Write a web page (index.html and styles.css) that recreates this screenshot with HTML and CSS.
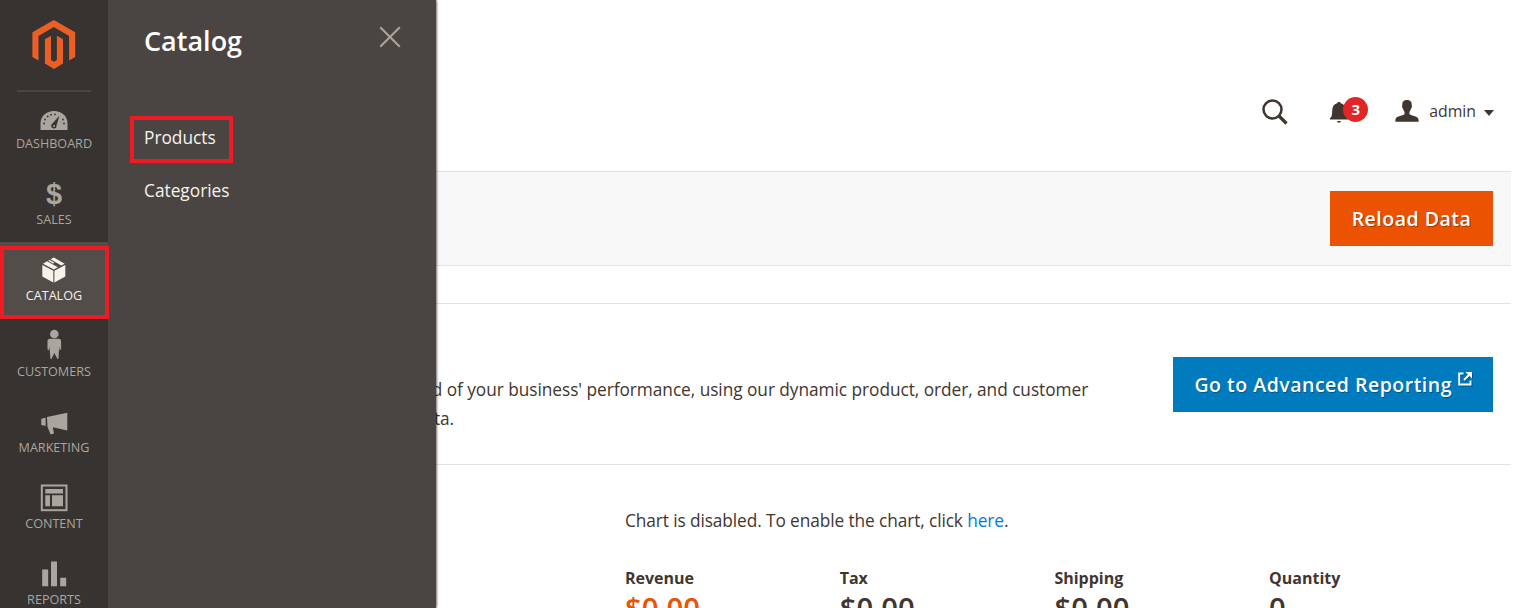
FILE: index.html
```
<!DOCTYPE html>
<html lang="en">
<head>
    <meta charset="UTF-8">
    <meta name="viewport" content="width=device-width, initial-scale=1.0">
    <title>Dashboard / Magento Admin</title>
    <link rel="stylesheet" href="styles.css">
</head>
<body>
    <aside class="menu-wrapper">
        <a class="logo" href="#">
            <svg width="44" height="50" viewBox="0 0 44 50">
                <path fill="#eb5f25" d="M21.8 0L43.2 12.3V37L37.1 40.5V15.9L21.8 7.1L6.5 15.9V40.5L.4 37V12.3ZM19 15.7V40L22 41.7L24.9 40V15.7L31 19.2V43.6L22 49L12.9 43.6V19.2Z"/>
            </svg>
        </a>
        <ul class="nav">
            <li class="nav-item">
                <a href="#">
                    <svg class="icon" viewBox="0 0 32 32">
                        <path fill="#aaa69f" d="M2.500 29V22.500C2.500 15 8.500 10 16 10s13.500 5 13.500 12.500V29Z"/>
                        <path fill="#373330" d="M21.500 14.500L18.500 24.500A2.700 2.700 0 1 1 14.500 22.500Z"/>
                        <circle cx="16" cy="25" r="1" fill="#aaa69f"/>
                        <g fill="#373330">
                            <circle cx="6" cy="22.500" r=".9"/><circle cx="7" cy="18.500" r=".9"/><circle cx="9.700" cy="15.500" r=".9"/>
                            <circle cx="13" cy="13.700" r=".9"/><circle cx="17" cy="13.300" r=".9"/><circle cx="25" cy="18.500" r=".9"/><circle cx="26" cy="22.500" r=".9"/>
                        </g>
                    </svg>
                    <span>Dashboard</span>
                </a>
            </li>
            <li class="nav-item">
                <a href="#">
                    <b class="icon dollar">$</b>
                    <span>Sales</span>
                </a>
            </li>
            <li class="nav-item active">
                <a href="#">
                    <svg class="icon" viewBox="0 0 32 32">
                        <g fill="#f7f3eb">
                            <path d="M4.300 11.900L15.300 17.800V29.500L4.300 23.400Z"/>
                            <path d="M27.300 11.900L16.400 17.800V29.500L27.300 23.400Z"/>
                            <path d="M5 10.700L9 8.300L19.800 14.300L15.900 16.600Z"/>
                            <path d="M12.500 6.300L15.900 4.500L26.600 10.700L23.300 12.500Z"/>
                            <path d="M10.100 7.700L11.400 7L16.500 9.800L14.900 10.400Z"/>
                        </g>
                    </svg>
                    <span>Catalog</span>
                </a>
            </li>
            <li class="nav-item">
                <a href="#">
                    <svg class="icon" viewBox="0 0 32 32">
                        <g fill="#aaa69f">
                            <circle cx="16.300" cy="5" r="4.300"/>
                            <path d="M12 9.800H20.600Q23.100 9.800 23.100 12.300V20.300L21.800 21.300L21.300 17.500L20.400 30H19.500L16.300 24L13.500 30H12.500L11.300 17.500L10.800 21.300L9.500 20.300V12.300Q9.500 9.800 12 9.800Z"/>
                        </g>
                    </svg>
                    <span>Customers</span>
                </a>
            </li>
            <li class="nav-item">
                <a href="#">
                    <svg class="icon" viewBox="0 0 32 32">
                        <g fill="#aaa69f">
                            <path d="M9 12.100L29.300 7.800V25.400L14.800 22.300L16 28.500L12.700 29.500L9.500 22Z"/>
                            <path d="M3.300 13.800L7.600 12.700V21.100L3.300 20.100Z"/>
                        </g>
                    </svg>
                    <span>Marketing</span>
                </a>
            </li>
            <li class="nav-item">
                <a href="#">
                    <svg class="icon" viewBox="0 0 32 32">
                        <rect x="3.800" y="4.500" width="24.700" height="24.700" fill="none" stroke="#aaa69f" stroke-width="2"/>
                        <path fill="#aaa69f" d="M7.300 8H25V12.400H7.300ZM7.300 14.200H12V25.200H7.300ZM14 14.200H25V25.200H14Z"/>
                    </svg>
                    <span>Content</span>
                </a>
            </li>
            <li class="nav-item">
                <a href="#">
                    <svg class="icon" viewBox="0 0 32 32">
                        <path fill="#aaa69f" d="M4.200 12.500H10.200V29.300H4.200ZM13 4.500H19V29.300H13ZM22.200 20.800H28.200V29.300H22.200Z"/>
                    </svg>
                    <span>Reports</span>
                </a>
            </li>
        </ul>
    </aside>

    <div class="submenu">
        <div class="submenu-title">
            <strong>Catalog</strong>
            <a href="#" class="close">
                <svg width="22" height="22" viewBox="0 0 22 22"><path d="M1.200 1.200L20.800 20.800M20.800 1.200L1.200 20.800" stroke="#aca39b" stroke-width="2.100"/></svg>
            </a>
        </div>
        <ul>
            <li class="marked"><a href="#">Products</a></li>
            <li><a href="#">Categories</a></li>
        </ul>
    </div>

    <div class="page-wrapper">
        <header class="page-header">
            <svg class="search" width="26" height="26" viewBox="0 0 26 26" fill="none" stroke="#41362f">
                <circle cx="10.500" cy="10.500" r="9" stroke-width="2.500"/>
                <path d="M17 17L24.500 24.500" stroke-width="3.200"/>
            </svg>
            <div class="notifications">
                <svg width="18" height="22" viewBox="0 0 18 22" fill="#41362f">
                    <path d="M0 18.500V17.300C2.500 15.500 2 12 2.300 8.500C2.600 5 4.500 3 7.200 2.300C7.300 .5 10.700 .5 10.800 2.300C13.500 3 15.400 5 15.700 8.500C16 12 15.500 15.500 18 17.300V18.500Z"/>
                    <path d="M7 20H11Q10.700 21.700 9 21.700T7 20Z"/>
                </svg>
                <span class="counter">3</span>
            </div>
            <div class="account">
                <svg width="24" height="22" viewBox="0 0 24 22" fill="#41362f">
                    <path d="M12 0C15.500 0 17 2.200 16.700 5.500C17.300 6 16.800 8 16 8.500C15.700 10.200 15 11 14.500 12V14.300C16.500 16 23.600 16 23.600 20V21.700H.4V20C.4 16 7.500 16 9.500 14.300V12C9 11 8.300 10.200 8 8.500C7.200 8 6.700 6 7.300 5.500C7 2.200 8.500 0 12 0Z"/>
                </svg>
                <span>admin</span>
                <i class="caret"></i>
            </div>
        </header>
        <div class="page-actions">
            <button class="btn primary">Reload Data</button>
        </div>
        <section class="reporting">
            <p>Gain new insights and take command of your business' performance, using our dynamic product, order, and customer reports tailored to your customer data.</p>
            <a href="#" class="btn advanced">Go to Advanced Reporting
                <svg width="14" height="14" viewBox="0 0 14 14" fill="none" stroke="#fff" stroke-width="1.900">
                    <path d="M5.500 1.500H1.200V12.500H12.500V8.500M6 8L12 2"/>
                    <path d="M7.500 0H14V6.500Z" fill="#fff" stroke="none"/>
                </svg>
            </a>
        </section>
        <section class="dashboard">
            <p>Chart is disabled. To enable the chart, click <a href="#">here</a>.</p>
            <ul class="totals">
                <li><span>Revenue</span><strong class="price">$0.00</strong></li>
                <li><span>Tax</span><strong>$0.00</strong></li>
                <li><span>Shipping</span><strong>$0.00</strong></li>
                <li><span>Quantity</span><strong>0</strong></li>
            </ul>
        </section>
    </div>
</body>
</html>
```
FILE: styles.css
```
*, *::after {
    box-sizing: border-box;
}
body {
    font-family: 'Open Sans', sans-serif;
    font-size: 17.3px;
    margin: 0;
    height: 608px;
    overflow: hidden;
    display: flex;
    position: relative;
    background-color: #fff;
    color: #41362f;
}
ul {
    list-style: none;
    margin: 0;
    padding: 0;
}
a {
    text-decoration: none;
}

/* left menu */
.menu-wrapper {
    width: 108px;
    height: 608px;
    flex-shrink: 0;
    background-color: #373330;
}
.logo {
    display: block;
    height: 92px;
    margin: 0 17px;
    padding: 20px 0 0 15px;
    border-bottom: 2px solid #4a4542;
}
.logo svg {
    display: block;
}
.nav {
    margin-top: -2px;
}
.nav-item a {
    display: flex;
    flex-direction: column;
    align-items: center;
    height: 76px;
    padding-top: 11px;
    color: #aaa69f;
    font-size: 12.6px;
    line-height: 16px;
    text-transform: uppercase;
}
.icon {
    width: 32px;
    height: 32px;
    flex-shrink: 0;
}
.nav-item span {
    margin-top: 3px;
}
.dollar {
    font-family: 'Liberation Sans', sans-serif;
    font-size: 29px;
    line-height: 34px;
    text-align: center;
}
.nav-item.active a {
    background-color: #524d49;
    color: #f7f3eb;
    position: relative;
}
.nav-item.active a::after {
    content: '';
    position: absolute;
    top: 4px;
    left: 0;
    width: 109px;
    height: 73px;
    border: 4px solid #ed1c24;
    z-index: 3;
}

/* flyout */
.submenu {
    position: absolute;
    top: 0;
    left: 108px;
    width: 328px;
    height: 608px;
    background-color: #4a4542;
    box-shadow: 0 0 3px #000;
    clip-path: inset(0 -6px 0 0);
}
.submenu-title {
    display: flex;
    justify-content: space-between;
    height: 116px;
    padding: 22px 35px 0 36px;
    color: #fff;
    font-size: 27px;
    line-height: 38px;
}
.submenu-title strong {
    font-weight: 600;
}
.close {
    height: 22px;
    margin-top: 4px;
    line-height: 0;
}
.submenu li {
    width: 103px;
    height: 47px;
    margin: 0 0 6px 22px;
    padding-left: 14px;
    line-height: 43px;
}
.submenu li.marked {
    padding-left: 10px;
    border: 4px solid #ed1c24;
    line-height: 35px;
}
.submenu li a {
    color: #f7f3eb;
}

/* page */
.page-wrapper {
    width: 1403px;
    height: 608px;
    flex-shrink: 0;
    overflow: hidden;
}
.page-header {
    display: flex;
    justify-content: flex-end;
    align-items: flex-start;
    height: 171px;
    padding: 99px 17px 0 0;
}
.notifications {
    position: relative;
    width: 38px;
    margin-left: 42px;
    padding-top: 2px;
}
.counter {
    position: absolute;
    top: -2px;
    right: 0;
    width: 25px;
    height: 25px;
    border-radius: 50%;
    background-color: #e22626;
    color: #fff;
    font-size: 15px;
    font-weight: 700;
    line-height: 24px;
    text-align: center;
}
.account {
    display: flex;
    margin: 1px 0 0 27px;
    font-size: 15.8px;
    line-height: 23px;
}
.account span {
    margin: 0 8px 0 10px;
}
.caret {
    height: 6px;
    margin-top: 10px;
    border: 5px solid transparent;
    border-top: 6px solid #41362f;
    border-bottom: 0;
}
.page-actions {
    display: flex;
    justify-content: flex-end;
    height: 95px;
    padding: 19px 18px 0 0;
    background-color: #f8f8f8;
    border-top: 1px solid #e3e3e3;
    border-bottom: 1px solid #e3e3e3;
}
.btn {
    height: 55px;
    border: 0;
    color: #fff;
    font-family: inherit;
    font-size: 19.5px;
    font-weight: 600;
    letter-spacing: 0.5px;
    line-height: 55px;
    text-align: center;
    text-shadow: 1px 1px 0 rgba(0,0,0,0.3);
}
.primary {
    width: 163px;
    padding: 0;
    background-color: #eb5202;
}
.advanced {
    width: 320px;
    background-color: #007bbe;
}
.advanced svg {
    position: relative;
    top: -6px;
    filter: drop-shadow(1px 1px 0 rgba(0,0,0,0.3));
}
.reporting {
    display: flex;
    justify-content: space-between;
    height: 162px;
    margin-top: 37px;
    padding: 53px 18px 0 34px;
    border-top: 1px solid #e3e3e3;
    border-bottom: 1px solid #e3e3e3;
}
.reporting p {
    width: 970px;
    margin: 19px 0 0;
    letter-spacing: -0.05px;
    line-height: 28.6px;
}
.dashboard {
    padding: 44px 0 0 517px;
}
.dashboard p {
    margin: 0 0 34px;
    letter-spacing: -0.1px;
    line-height: 24px;
}
.dashboard p a {
    color: #007bdb;
}
.totals {
    display: flex;
}
.totals li {
    width: 214.7px;
    flex-shrink: 0;
}
.totals span {
    display: block;
    font-size: 16px;
    font-weight: 700;
    line-height: 22px;
}
.totals strong {
    display: block;
    font-size: 29.3px;
    font-weight: 600;
    line-height: 39px;
}
.totals .price {
    color: #eb5202;
}
```
